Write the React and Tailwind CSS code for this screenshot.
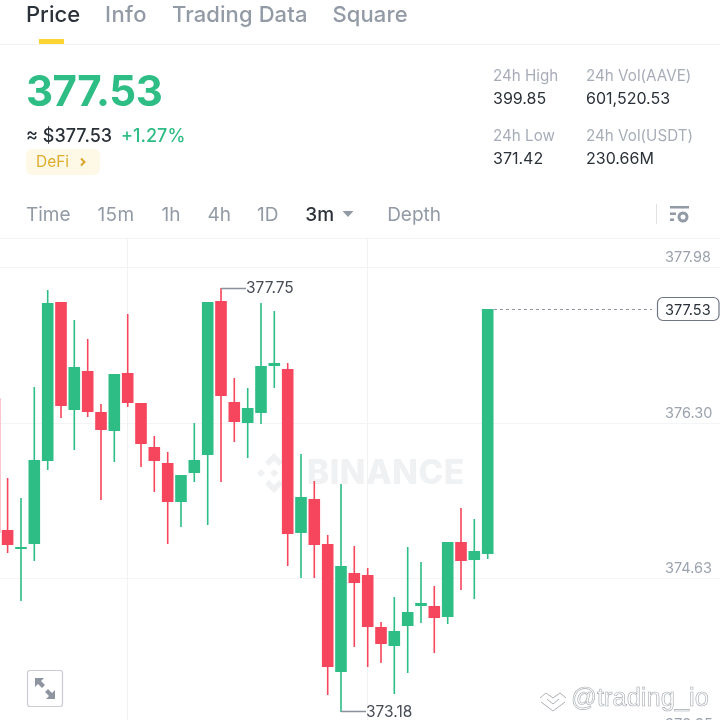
const G = "#2ebd85";
const R = "#f6465d";
// [centerX, wickTop, wickBottom, bodyTop, bodyBottom, up]
const candles = [
  [7.6,478,553,530,545,0],[21,498,601,547,549,1],[34.3,387,561,460,544,1],[47.7,290,470,303,461,1],
  [61,302,418,302,406,0],[74.3,320,450,367,410,1],[87.7,339,417,371,412,0],[101,404,500,412,430,0],
  [114.3,374,462,374,431,1],[127.7,314,407,373,403,0],[141,403,467,403,444,0],[154.3,436,492,447,461,0],
  [167.7,452,544,463,502,0],[181,475,527,475,502,1],[194.3,423,482,460,473,1],[207.7,302,525,302,455,1],
  [221,288,482,301,396,0],[234.3,378,442,402,422,0],[247.7,388,458,408,423,1],[261,303,424,366,413,1],
  [274.3,311,388,363,366,1],[287.7,363,566,369,534,0],[301,454,578,497,533,1],[314.3,481,578,499,545,0],
  [327.7,535,695,544,667,0],[341,484,712,566,672,1],[354.3,546,647,573,583,0],[367.7,568,667,575,627,0],
  [381,622,663,627,644,0],[394.3,597,694,631,646,1],[407.7,547,673,612,626,1],[421,562,623,603,606,1],
  [434.3,586,653,606,618,0],[447.7,542,624,542,617,1],[461,508,590,542,561,0],[474.3,519,599,551,560,1],
  [487.7,309,559,309,554,1],
];
const OFF = 239;
const font = { fontFamily: "Inter, 'Noto Sans', sans-serif" };

function Stat({ label, value }) {
  return (
    <div className="flex flex-col whitespace-nowrap">
      <span className="text-[15.2px] leading-[20px] text-[#a7adb8]">{label}</span>
      <span className="mt-[2px] text-[16px] leading-[20px] text-[#2b3139]">{value}</span>
    </div>
  );
}

function Chart() {
  return (
    <svg width="720" height="481" viewBox={`0 ${OFF} 720 481`} className="block">
      {[267, 423, 578].map((y) => <rect key={y} x="0" y={y} width="720" height="1" fill="#f3f4f5" />)}
      {[127, 367].map((x) => <rect key={x} x={x} y={OFF} width="1" height="481" fill="#f1f2f3" />)}
      <g fill="#f0f1f3">
        <path d="M274 453l9 9-4 4-5-5-5 5-4-4z" />
        <path d="M274 469l4.500 4-4.500 4-4-4z" />
        <path d="M274 493l-9-9 4-4 5 5 5-5 4 4z" />
        <path d="M257 473l4-4 4 4-4 4zM283 473l4-4 4 4-4 4z" />
      </g>
      <text x="307" y="484" fontSize="33.500" fontWeight="800" fill="#f0f1f3" letterSpacing="0.5" style={font}>BINANCE</text>
      <rect x="0" y="398" width="1" height="135" fill="#f9c6cd" />
      {candles.map(([x, wt, wb, bt, bb, up]) => {
        const c = up ? G : R;
        return (
          <g key={x}>
            <rect x={x - 0.8} y={wt} width="1.6" height={wb - wt} fill={c} />
            <rect x={x - 5.800} y={bt} width="11.600" height={bb - bt} fill={c} />
          </g>
        );
      })}
      <path d="M221 288.500h25M341 711.500h25" stroke="#8a919d" strokeWidth="1.300" fill="none" />
      <line x1="494" y1="309.500" x2="652" y2="309.500" stroke="#8f96a1" strokeWidth="1" strokeDasharray="3 3" />
      <g fontSize="15.500" fill="#474d57" style={font}>
        <text x="246" y="292.500">377.75</text>
        <text x="366" y="716.500">373.18</text>
      </g>
      <g fontSize="14.500" fill="#9ca3ae" style={font}>
        <text x="665" y="262">377.98</text>
        <text x="665" y="417.500">376.30</text>
        <text x="665" y="573">374.63</text>
        <text x="665" y="729">372.95</text>
      </g>
      <rect x="657.500" y="297.500" width="61.500" height="23" rx="5.500" fill="#fff" stroke="#6f7682" strokeWidth="1.200" />
      <text x="665" y="314.500" fontSize="14.500" fill="#2b3139" style={font}>377.53</text>
      <text x="571" y="706" fontSize="25.500" fill="#fff" stroke="#a4a8ae" strokeWidth="0.600" style={{ fontFamily: "'Liberation Sans', sans-serif" }}>@trading_io</text>
      <g fill="none" stroke="#a4a8ae" strokeWidth="0.900">
        <path d="M540 698l6-5 7 5 7-5 6 5" />
        <path d="M547 699l6 5 6-5M541 702l12 9 12-9" />
      </g>
      <rect x="27.500" y="670.500" width="35" height="36" rx="2.500" fill="#fff" stroke="#c9ccd2" strokeWidth="1.200" />
      <g fill="#8e95a1">
        <path d="M35 678h9l-3 3 4 4-3 3-4-4-3 3z" />
        <path d="M55 699h-9l3-3-4-4 3-3 4 4 3-3z" />
      </g>
    </svg>
  );
}

export default function App() {
  return (
    <div className="flex h-[720px] w-[720px] flex-col overflow-hidden bg-white blur-[0.4px]" style={font}>
      <div className="flex h-[45px] shrink-0 gap-[25px] border-b border-[#f1f2f3] pl-[26px] text-[22px] font-medium text-[#929aa5]">
        <div className="relative h-[44px] leading-[28px] text-[#2b3139]">
          Price
          <div className="absolute bottom-0 left-[13px] h-[5px] w-[25px] bg-[#fcd535]" />
        </div>
        <div className="leading-[28px] tracking-[0.4px]">Info</div>
        <div className="leading-[28px] tracking-[0.1px]">Trading Data</div>
        <div className="leading-[28px] tracking-[0.1px]">Square</div>
      </div>

      <div className="flex h-[150px] shrink-0 justify-between pl-[26px] pr-[27px]">
        <div className="flex flex-col">
          <div className="mt-[18px] text-[42px] font-bold leading-[56px] tracking-[-0.5px] text-[#2ebd85]">377.53</div>
          <div className="mt-[5px] flex items-baseline gap-[9px] text-[18px] leading-[24px]">
            <span className="font-medium text-[#2b3139]">≈ $377.53</span>
            <span className="font-medium text-[#2ebd85]">+1.27%</span>
          </div>
          <div className="mt-[1px] flex h-[26px] w-[74px] items-center gap-[10px] rounded-[6px] bg-[#fef8e6] pl-[10px] text-[15.500px] text-[#dfae2f]">
            <span>DeFi</span>
            <svg width="8" height="10" viewBox="0 0 8 10"><path d="M2 1.500L5.500 5 2 8.500" stroke="#d9a52a" strokeWidth="2" fill="none" /></svg>
          </div>
        </div>
        <div className="mt-[21px] flex">
          <div className="flex w-[93px] flex-col gap-[18px]">
            <Stat label="24h High" value="399.85" />
            <Stat label="24h Low" value="371.42" />
          </div>
          <div className="flex w-[107px] flex-col gap-[18px]">
            <Stat label="24h Vol(AAVE)" value="601,520.53" />
            <Stat label="24h Vol(USDT)" value="230.66M" />
          </div>
        </div>
      </div>

      <div className="flex h-[44px] shrink-0 items-start justify-between border-b border-[#f1f2f3] pl-[26px] pr-[30px] pt-[6px] text-[19px] leading-[28px] text-[#929aa5]">
        <div className="flex items-center">
          <span>Time</span>
          <span className="ml-[27px] tracking-[0.3px]">15m</span>
          <span className="ml-[27px]">1h</span>
          <span className="ml-[27px]">4h</span>
          <span className="ml-[26px]">1D</span>
          <span className="ml-[27px] font-medium text-[#2b3139]">3m</span>
          <svg className="ml-[8px] -mt-[3px]" width="12" height="8" viewBox="0 0 12 8"><path d="M0.500 1h11L6 7z" fill="#929aa5" /></svg>
          <span className="ml-[33px]">Depth</span>
        </div>
        <div className="flex h-[26px] items-center gap-[13px]">
          <div className="h-[20px] w-px bg-[#dfe1e5]" />
          <svg width="20" height="20" viewBox="0 0 20 20" fill="#929aa5">
            <rect x="0" y="2" width="19" height="2.500" />
            <rect x="0" y="8.500" width="6" height="2.500" />
            <rect x="0" y="14.500" width="4" height="2.500" />
            <circle cx="13" cy="13" r="4" fill="none" stroke="#929aa5" strokeWidth="3" />
          </svg>
        </div>
      </div>

      <Chart />
    </div>
  );
}
